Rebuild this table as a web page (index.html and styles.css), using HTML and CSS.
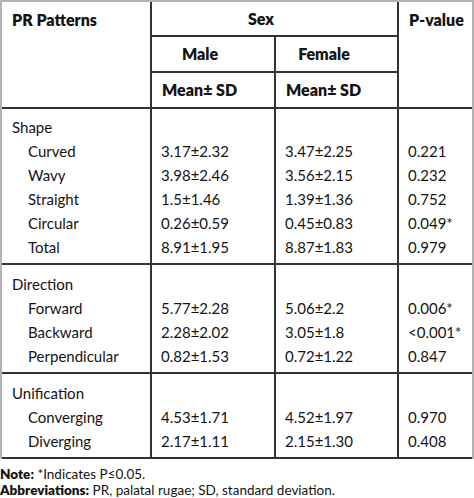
FILE: index.html
```html
<!DOCTYPE html>
<html lang="en">
<head>
<meta charset="utf-8">
<title>PR Patterns by Sex</title>
<link rel="stylesheet" href="styles.css">
</head>
<body>
<table class="stats">
  <colgroup>
    <col class="c-label">
    <col class="c-male">
    <col class="c-female">
    <col class="c-p">
  </colgroup>
  <thead>
    <tr class="h1">
      <th class="lab" rowspan="3">PR Patterns</th>
      <th class="sex" colspan="2">Sex</th>
      <th class="pv" rowspan="3">P-value</th>
    </tr>
    <tr class="h2">
      <th class="sub"><span class="ctr">Male</span></th>
      <th class="sub"><span class="ctr">Female</span></th>
    </tr>
    <tr class="h3">
      <th class="sub">Mean± SD</th>
      <th class="sub">Mean± SD</th>
    </tr>
  </thead>
  <tbody>
    <tr class="sec first">
      <td class="lab">
        <div>Shape</div>
        <div class="ind">Curved</div>
        <div class="ind">Wavy</div>
        <div class="ind">Straight</div>
        <div class="ind">Circular</div>
        <div class="ind">Total</div>
      </td>
      <td class="val">
        <div>&nbsp;</div>
        <div>3.17±2.32</div>
        <div>3.98±2.46</div>
        <div>1.5±1.46</div>
        <div>0.26±0.59</div>
        <div>8.91±1.95</div>
      </td>
      <td class="val">
        <div>&nbsp;</div>
        <div>3.47±2.25</div>
        <div>3.56±2.15</div>
        <div>1.39±1.36</div>
        <div>0.45±0.83</div>
        <div>8.87±1.83</div>
      </td>
      <td class="val">
        <div>&nbsp;</div>
        <div>0.221</div>
        <div>0.232</div>
        <div>0.752</div>
        <div>0.049*</div>
        <div>0.979</div>
      </td>
    </tr>
    <tr class="sec">
      <td class="lab">
        <div>Direction</div>
        <div class="ind">Forward</div>
        <div class="ind">Backward</div>
        <div class="ind">Perpendicular</div>
      </td>
      <td class="val">
        <div>&nbsp;</div>
        <div>5.77±2.28</div>
        <div>2.28±2.02</div>
        <div>0.82±1.53</div>
      </td>
      <td class="val">
        <div>&nbsp;</div>
        <div>5.06±2.2</div>
        <div>3.05±1.8</div>
        <div>0.72±1.22</div>
      </td>
      <td class="val">
        <div>&nbsp;</div>
        <div>0.006*</div>
        <div>&lt;0.001*</div>
        <div>0.847</div>
      </td>
    </tr>
    <tr class="sec">
      <td class="lab">
        <div>Unification</div>
        <div class="ind">Converging</div>
        <div class="ind">Diverging</div>
      </td>
      <td class="val">
        <div>&nbsp;</div>
        <div>4.53±1.71</div>
        <div>2.17±1.11</div>
      </td>
      <td class="val">
        <div>&nbsp;</div>
        <div>4.52±1.97</div>
        <div>2.15±1.30</div>
      </td>
      <td class="val">
        <div>&nbsp;</div>
        <div>0.970</div>
        <div>0.408</div>
      </td>
    </tr>
  </tbody>
</table>
<div class="notes">
  <p><b>Note:</b> *Indicates P≤0.05.</p>
  <p><b>Abbreviations:</b> PR, palatal rugae; SD, standard deviation.</p>
</div>
</body>
</html>
```

FILE: styles.css
```css
html, body {
  margin: 0;
  padding: 0;
  background: #ffffff;
}

body {
  width: 474px;
  font-family: Lato, "Open Sans", "Liberation Sans", sans-serif;
  color: #141414;
}

.stats {
  width: 474px;
  border-collapse: separate;
  border-spacing: 0;
  table-layout: fixed;
  border-top: 2px solid #b3b3b3;
  border-left: 2px solid #b3b3b3;
  border-right: 2px solid #b3b3b3;
  font-size: 15px;
}

.c-label { width: 148px; }
.c-male { width: 124px; }
.c-female { width: 123px; }
.c-p { width: 75px; }

.stats th,
.stats td {
  padding: 0;
  text-align: left;
  vertical-align: top;
}

.stats th {
  font-size: 16px;
  font-weight: 800;
  line-height: 20px;
}

.stats th.lab {
  padding: 8px 0 0 10px;
  border-bottom: 2px solid #333333;
}

.stats th.pv {
  padding: 8px 0 0 10px;
  border-left: 2px solid #333333;
  border-bottom: 2px solid #333333;
}

.stats th.sex {
  height: 35px;
  box-sizing: border-box;
  padding: 7px 0 0 96px;
  border-left: 2px solid #333333;
  border-bottom: 2px solid #333333;
}

.stats th.sub {
  height: 36px;
  box-sizing: border-box;
  padding: 7px 0 0 10px;
  border-left: 2px solid #333333;
  border-bottom: 2px solid #333333;
}

.ctr {
  display: inline-block;
  width: 76px;
  text-align: center;
}

.stats td {
  line-height: 24px;
  padding-top: 7px;
  padding-bottom: 4px;
  border-bottom: 2px solid #333333;
}

.stats .first td {
  padding-top: 6px;
}

.stats td.lab {
  padding-left: 10px;
}

.stats td.val {
  padding-left: 9px;
  border-left: 2px solid #333333;
}

.ind {
  padding-left: 16px;
}

.notes {
  font-size: 13.5px;
  line-height: 16px;
  padding-top: 7px;
}

.notes p {
  margin: 0;
}

.notes b {
  font-weight: 800;
}
```
